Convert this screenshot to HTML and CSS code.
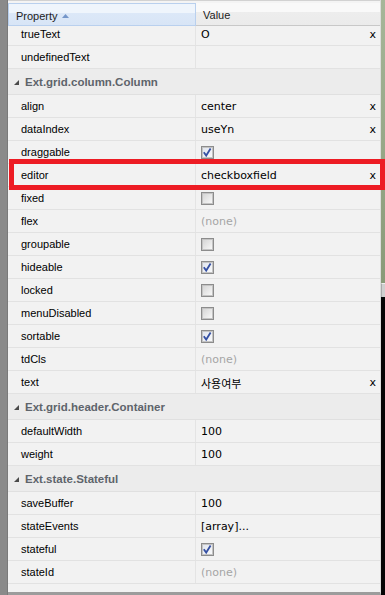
FILE: index.html
```html
<!DOCTYPE html>
<html lang="en">
<head>
    <meta charset="UTF-8">
    <meta name="viewport" content="width=device-width, initial-scale=1.0">
    <title>Property Grid</title>
    <link rel="stylesheet" href="styles.css">
</head>
<body>
    <div class="window">
        <div class="frame-left"></div>

        <div class="grid">
            <div class="grid-top"></div>
            <div class="grid-header">
                <div class="hd hd-sorted">Property
                    <svg class="sort-arrow" width="7" height="4" viewBox="0 0 7 4"><polygon points="0,4 3.5,0 7,4" fill="#7596c9"/></svg>
                </div>
                <div class="hd">Value</div>
            </div>

            <div class="grid-body">
                <div class="rows">
                    <div class="row"><div class="name">trueText</div><div class="value"><span>O</span><span class="clear">x</span></div></div>
                    <div class="row"><div class="name">undefinedText</div><div class="value"></div></div>

                    <div class="group"><svg class="expander" width="5" height="5" viewBox="0 0 5 5"><polygon points="5,0 5,5 0,5" fill="#4a4a4a"/></svg>Ext.grid.column.Column</div>
                    <div class="row"><div class="name">align</div><div class="value"><span>center</span><span class="clear">x</span></div></div>
                    <div class="row"><div class="name">dataIndex</div><div class="value"><span>useYn</span><span class="clear">x</span></div></div>
                    <div class="row"><div class="name">draggable</div><div class="value"><span class="cb checked"><svg width="11" height="11" viewBox="0 0 11 11"><path d="M1.8 5.2 L4.2 8.6 L8.6 1.6" fill="none" stroke="#3550a3" stroke-width="1.8"/></svg></span></div></div>
                    <div class="row"><div class="name">editor</div><div class="value"><span>checkboxfield</span><span class="clear">x</span></div></div>
                    <div class="row"><div class="name">fixed</div><div class="value"><span class="cb"></span></div></div>
                    <div class="row"><div class="name">flex</div><div class="value"><span class="none">(none)</span></div></div>
                    <div class="row"><div class="name">groupable</div><div class="value"><span class="cb"></span></div></div>
                    <div class="row"><div class="name">hideable</div><div class="value"><span class="cb checked"><svg width="11" height="11" viewBox="0 0 11 11"><path d="M1.8 5.2 L4.2 8.6 L8.6 1.6" fill="none" stroke="#3550a3" stroke-width="1.8"/></svg></span></div></div>
                    <div class="row"><div class="name">locked</div><div class="value"><span class="cb"></span></div></div>
                    <div class="row"><div class="name">menuDisabled</div><div class="value"><span class="cb"></span></div></div>
                    <div class="row"><div class="name">sortable</div><div class="value"><span class="cb checked"><svg width="11" height="11" viewBox="0 0 11 11"><path d="M1.8 5.2 L4.2 8.6 L8.6 1.6" fill="none" stroke="#3550a3" stroke-width="1.8"/></svg></span></div></div>
                    <div class="row"><div class="name">tdCls</div><div class="value"><span class="none">(none)</span></div></div>
                    <div class="row"><div class="name">text</div><div class="value"><span>사용여부</span><span class="clear">x</span></div></div>

                    <div class="group"><svg class="expander" width="5" height="5" viewBox="0 0 5 5"><polygon points="5,0 5,5 0,5" fill="#4a4a4a"/></svg>Ext.grid.header.Container</div>
                    <div class="row"><div class="name">defaultWidth</div><div class="value"><span>100</span></div></div>
                    <div class="row"><div class="name">weight</div><div class="value"><span>100</span></div></div>

                    <div class="group"><svg class="expander" width="5" height="5" viewBox="0 0 5 5"><polygon points="5,0 5,5 0,5" fill="#4a4a4a"/></svg>Ext.state.Stateful</div>
                    <div class="row"><div class="name">saveBuffer</div><div class="value"><span>100</span></div></div>
                    <div class="row"><div class="name">stateEvents</div><div class="value"><span>[array]...</span></div></div>
                    <div class="row"><div class="name">stateful</div><div class="value"><span class="cb checked"><svg width="11" height="11" viewBox="0 0 11 11"><path d="M1.8 5.2 L4.2 8.6 L8.6 1.6" fill="none" stroke="#3550a3" stroke-width="1.8"/></svg></span></div></div>
                    <div class="row"><div class="name">stateId</div><div class="value"><span class="none">(none)</span></div></div>
                </div>
            </div>
        </div>

        <div class="frame-right">
            <div class="fr-green"></div>
            <div class="fr-thumb"></div>
            <div class="fr-dark"></div>
        </div>

        <!-- red annotation box around the editor row -->
        <div class="highlight"></div>
    </div>
</body>
</html>
```

FILE: styles.css
```css
* {
    margin: 0;
    padding: 0;
    box-sizing: border-box;
}

body {
    font-family: 'Liberation Sans', Arial, sans-serif;
    font-size: 11px;
    color: #000;
    background-color: #000;
    overflow: hidden;
}

.window {
    position: relative;
    display: flex;
    width: 385px;
    height: 595px;
}

.frame-left {
    width: 8px;
    background-color: #8a8a8a;
    border-right: 1px solid #7a7a7a;
}

.grid {
    width: 373px;
    display: flex;
    flex-direction: column;
    background-color: #f2f2f2;
    border-right: 1px solid #dcdcdc;
    border-bottom: 3px solid #9c9c9c;
}

.grid-top {
    height: 3px;
    background-color: #f4f4f4;
    border-top: 1px solid #d2d2d2;
}

/* column headers */
.grid-header {
    display: grid;
    grid-template-columns: 188px 1fr;
    height: 23px;
}

.hd {
    display: flex;
    align-items: center;
    padding: 2px 0 0 7px;
    color: #222;
    background: linear-gradient(#f9f9f9 0, #f9f9f9 9px, #ededed 9px, #ebebeb 100%);
    border-bottom: 1px solid #c8c8c8;
}

.hd-sorted {
    background: linear-gradient(#eff5fc 0, #eff5fc 9px, #dce8f8 9px, #d8e5f6 100%);
    border: 1px solid #b9d0ee;
    padding-left: 7px;
}

.sort-arrow {
    margin-left: 4px;
    margin-top: 1px;
}

/* body */
.grid-body {
    flex: 1;
    overflow: hidden;
}

.rows {
    margin-top: -3px;
}

.row {
    display: grid;
    grid-template-columns: 188px 1fr;
    height: 23px;
    border-bottom: 1px solid #e2e2e2;
}

.name {
    padding: 1px 0 0 13px;
    line-height: 21px;
    border-right: 1px solid #e4e4e4;
}

.value {
    display: flex;
    align-items: center;
    justify-content: space-between;
    padding: 1px 4px 0 5px;
    font-family: 'DejaVu Sans', 'Noto Sans CJK KR', sans-serif;
    font-size: 11px;
}

.clear {
    font-size: 11px;
    margin-top: -1px;
}

.none {
    color: #a5a5a5;
}

.group {
    display: flex;
    align-items: center;
    height: 26px;
    padding: 1px 0 0 6px;
    background-color: #ececec;
    border-bottom: 1px solid #e0e0e0;
    font-size: 11.5px;
    font-weight: bold;
    color: #5e646b;
}

.expander {
    margin-right: 6px;
    margin-top: 1px;
}

/* checkbox */
.cb {
    display: flex;
    align-items: center;
    justify-content: center;
    width: 13px;
    height: 13px;
    margin-top: -1px;
    border: 1px solid #8c8c8c;
    background: linear-gradient(135deg, #d2d2d2, #fbfbfb);
    box-shadow: inset 0 0 0 1px #c4c4c4;
}

.cb.checked {
    background: linear-gradient(135deg, #dfe4ee, #fbfbfb);
}

/* right window edge */
.frame-right {
    width: 4px;
    display: flex;
    flex-direction: column;
}

.fr-green {
    height: 283px;
    background: linear-gradient(#a6b699, #899a78);
}

.fr-thumb {
    height: 14px;
    background-color: #cfcfcf;
    border-top: 1px solid #eee;
    border-left: 1px solid #aaa;
}

.fr-dark {
    flex: 1;
    background-color: #050505;
}

.highlight {
    position: absolute;
    left: 9px;
    top: 159px;
    width: 376px;
    height: 31px;
    border: 5px solid #ed1c24;
}
```
